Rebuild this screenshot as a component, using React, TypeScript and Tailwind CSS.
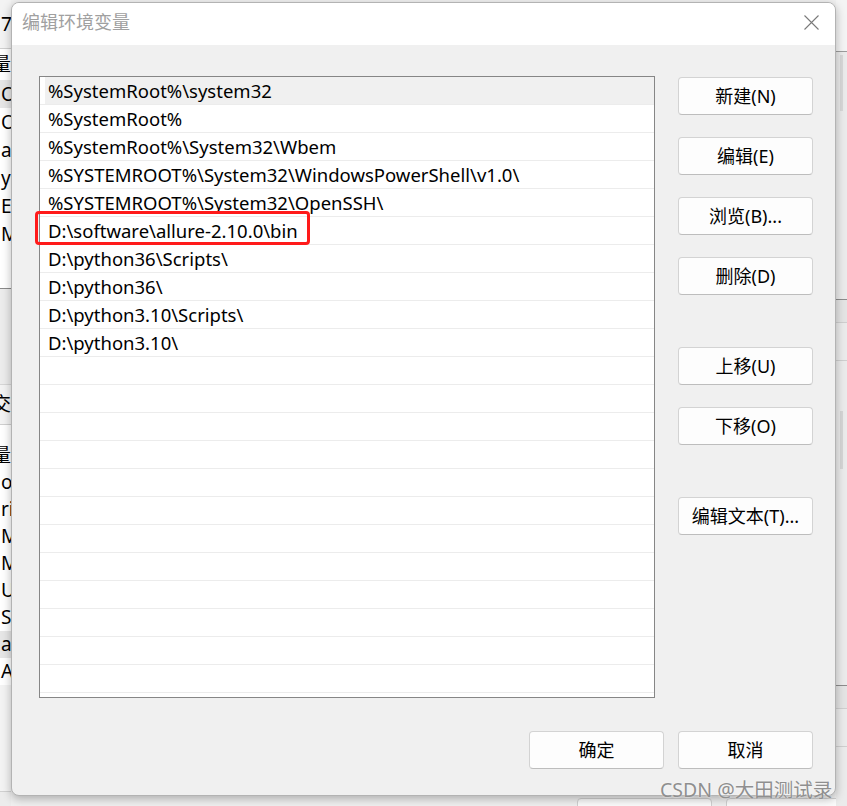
import type { ReactNode } from 'react';

const paths = [
  '%SystemRoot%\\system32',
  '%SystemRoot%',
  '%SystemRoot%\\System32\\Wbem',
  '%SYSTEMROOT%\\System32\\WindowsPowerShell\\v1.0\\',
  '%SYSTEMROOT%\\System32\\OpenSSH\\',
  'D:\\software\\allure-2.10.0\\bin',
  'D:\\python36\\Scripts\\',
  'D:\\python36\\',
  'D:\\python3.10\\Scripts\\',
  'D:\\python3.10\\',
];

const rows = Array.from({ length: 23 }, (_, i) => paths[i] ?? '');

const leftTop = ['On', 'On', 'at', 'ys', 'EI', 'M'];
const leftBottom = ['变量', 'o', 'ri', 'M', 'M', 'U', 'S', 'at', 'A'];

function Btn({ children, className = '' }: { children: ReactNode; className?: string }) {
  return (
    <button
      className={`flex h-[38px] w-[135px] items-center justify-center rounded-[4px] border border-[#d3d3d3] border-b-[#bdbdbd] bg-[#fdfdfd] text-[18px] text-black ${className}`}
    >
      {children}
    </button>
  );
}

function Background() {
  return (
    <div className="flex h-full w-full">
      {/* left strip of the window behind */}
      <div className="flex w-[11px] shrink-0 flex-col overflow-hidden bg-white text-[19px] leading-none text-black">
        <div className="flex h-[49px] shrink-0 items-center border-b border-[#cfcfcf] bg-[#f3f3f3] pl-[1px]">7</div>
        <div className="flex h-[31px] shrink-0 items-center justify-end whitespace-nowrap">变量</div>
        {leftTop.map((t, i) => (
          <div
            key={i}
            className={`flex h-[28px] shrink-0 items-center whitespace-nowrap pl-[1px] ${i === 0 ? 'bg-[#e6e6e6]' : ''}`}
          >
            {t}
          </div>
        ))}
        <div className="h-[41px] shrink-0 border-b border-[#8a8a8a]" />
        <div className="h-[96px] shrink-0 border-b border-[#d6d6d6] bg-[#ececec]" />
        <div className="flex h-[40px] shrink-0 items-center justify-end whitespace-nowrap border-b border-[#cfcfcf] bg-[#f3f3f3]">
          交
        </div>
        <div className="h-[17px] shrink-0" />
        {leftBottom.map((t, i) => (
          <div
            key={i}
            className={`flex h-[27px] shrink-0 items-center whitespace-nowrap ${i === 0 ? 'justify-end' : 'pl-[1px]'} ${
              i === 7 ? 'bg-[#e6e6e6]' : ''
            }`}
          >
            {t}
          </div>
        ))}
        <div className="flex-1 border-b border-[#d0d0d0] bg-[#f3f3f3]" />
        <div className="h-[14px] shrink-0 bg-[#ececec]" />
      </div>

      {/* middle, only the bottom edge shows */}
      <div className="flex min-w-0 flex-1 flex-col overflow-hidden bg-[#f0f0f0]">
        <div className="flex-1" />
        <div className="flex h-[8px] items-start gap-[14px] pl-[566px]">
          <div className="h-[14px] w-[135px] shrink-0 rounded-t-[4px] border border-[#d0d0d0] bg-[#fbfbfb]" />
          <div className="h-[14px] w-[135px] shrink-0 rounded-t-[4px] border border-[#d0d0d0] bg-[#fbfbfb]" />
        </div>
      </div>

      {/* right strip */}
      <div className="flex w-[11px] shrink-0 flex-col bg-[#ebebeb]">
        <div className="h-[52px] shrink-0 border-b border-[#9c9c9c] bg-[#f4f4f4]" />
        <div className="flex h-[247px] shrink-0 pl-[4px] pt-[3px]">
          <div className="h-[56px] w-[3px] bg-[#d8d8d8]" />
        </div>
        <div className="h-[23px] shrink-0 border-t border-[#8c8c8c] bg-[#e4e4e4]" />
        <div className="h-[38px] shrink-0 border-t border-[#cfcfcf]" />
        <div className="flex h-[325px] shrink-0 border-t border-[#cfcfcf] pl-[4px] pt-[50px]">
          <div className="h-[58px] w-[3px] bg-[#d6d6d6]" />
        </div>
        <div className="h-[23px] shrink-0 border-t border-[#8c8c8c] bg-[#e4e4e4]" />
        <div className="h-[38px] shrink-0 border-t border-[#cfcfcf]" />
        <div className="flex-1 border-t border-[#cfcfcf]" />
      </div>
    </div>
  );
}

export default function App() {
  return (
    <div className="relative h-[806px] w-[847px] overflow-hidden bg-[#f0f0f0] font-['Noto_Sans','Noto_Sans_CJK_SC',sans-serif]">
      <Background />

      <div className="absolute left-[11px] top-[2px] flex h-[794px] w-[825px] flex-col overflow-hidden rounded-[8px] border border-[#b3b3b3] bg-[#f0f0f0] shadow-[0_3px_10px_rgba(0,0,0,0.28)]">
        <div className="flex h-[42px] items-center justify-between bg-white pb-[4px] pl-[10px] pr-[16px]">
          <span className="text-[18px] text-[#a0a0a0]">编辑环境变量</span>
          <svg width="15" height="15" viewBox="0 0 15 15" className="text-[#7a7a7a]">
            <path d="M0.5 0.5 L14.5 14.5 M14.5 0.5 L0.5 14.5" stroke="currentColor" strokeWidth="1.1" fill="none" />
          </svg>
        </div>

        <div className="flex flex-1 flex-col pb-[26px] pl-[27px] pr-[22px] pt-[31px]">
          <div className="flex gap-[23px]">
            <div className="relative h-[622px] w-[616px] border border-[#868686] bg-white">
              <div className="h-full overflow-hidden">
                {rows.map((p, i) => (
                  <div key={i} className="flex h-[28px] border-b border-[#ececec] pl-[1px]">
                    <div
                      className={`flex flex-1 items-center whitespace-nowrap pl-[3px] pt-[1px] text-[18.5px] text-black ${
                        i === 0 ? 'ml-[4px] bg-[#f0f0f0]' : 'ml-[4px]'
                      }`}
                    >
                      {p}
                    </div>
                  </div>
                ))}
              </div>
              <div className="absolute left-[-5px] top-[134px] h-[34px] w-[275px] rounded-[4px] border-[3px] border-[#ff1a1a]" />
            </div>

            <div className="mt-[1px] flex w-[135px] flex-col gap-[22px]">
              <Btn>新建(N)</Btn>
              <Btn>编辑(E)</Btn>
              <Btn>浏览(B)...</Btn>
              <Btn>删除(D)</Btn>
              <Btn className="mt-[30px]">上移(U)</Btn>
              <Btn>下移(O)</Btn>
              <Btn className="mt-[30px]">编辑文本(T)...</Btn>
            </div>
          </div>

          <div className="mt-[33px] flex justify-end gap-[14px]">
            <Btn>确定</Btn>
            <Btn>取消</Btn>
          </div>
        </div>
      </div>

      <div className="absolute left-[660px] top-[775px] whitespace-nowrap text-[19.5px] text-[#8f8f8f] [text-shadow:0_0_2px_rgba(255,255,255,0.8)]">
        CSDN @大田测试录
      </div>
    </div>
  );
}
